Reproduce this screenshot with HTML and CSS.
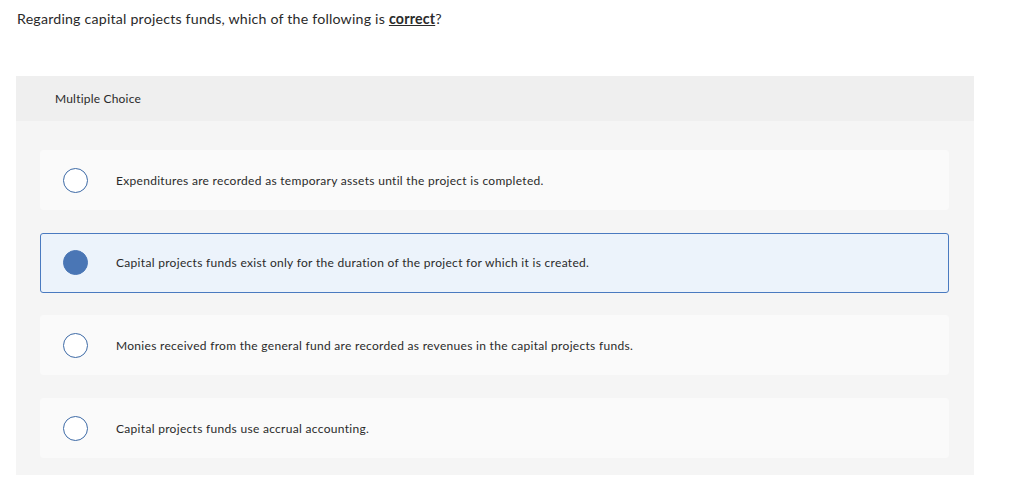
FILE: index.html
```html
<!DOCTYPE html>
<html lang="en">
<head>
    <meta charset="UTF-8">
    <title>Multiple Choice</title>
    <link rel="stylesheet" href="styles.css">
</head>
<body>
<p class="question">Regarding capital projects funds, which of the following is <strong>correct</strong>?</p>
<div class="quiz">
    <div class="quiz-head">Multiple Choice</div>
    <div class="quiz-body">
        <label class="choice">
            <span class="radio"></span>
            <span class="choice-text">Expenditures are recorded as temporary assets until the project is completed.</span>
        </label>
        <label class="choice selected">
            <span class="radio"></span>
            <span class="choice-text">Capital projects funds exist only for the duration of the project for which it is created.</span>
        </label>
        <label class="choice">
            <span class="radio"></span>
            <span class="choice-text">Monies received from the general fund are recorded as revenues in the capital projects funds.</span>
        </label>
        <label class="choice">
            <span class="radio"></span>
            <span class="choice-text">Capital projects funds use accrual accounting.</span>
        </label>
    </div>
</div>
</body>
</html>
```

FILE: styles.css
```css
body {
    margin: 0;
    padding: 0 16px;
    font-family: "Lato", "Liberation Sans", sans-serif;
    color: #2a2a2a;
    background: #fff;
}

.question {
    margin: 0;
    padding: 10px 0 0 1px;
    height: 76px;
    box-sizing: border-box;
    font-size: 14.2px;
    letter-spacing: 0.2px;
}

.question strong {
    text-decoration: underline;
    font-weight: 700;
}

.quiz {
    width: 958px;
    background-color: #f5f5f5;
}

.quiz-head {
    height: 45px;
    background-color: #efefef;
    padding-left: 39px;
    display: flex;
    align-items: center;
    font-size: 12px;
    letter-spacing: 0.2px;
}

.quiz-body {
    display: flex;
    flex-direction: column;
    gap: 22.7px;
    padding: 29px 25px 17px 24px;
}

.choice {
    display: flex;
    align-items: center;
    height: 60px;
    box-sizing: border-box;
    background-color: #fafafa;
    border: 1px solid #fafafa;
    border-radius: 3px;
    padding-left: 22px;
}

.choice.selected {
    background-color: #ecf3fb;
    border-color: #4a7ac0;
}

.radio {
    width: 25px;
    height: 25px;
    box-sizing: border-box;
    border: 1.5px solid #3d6aa6;
    border-radius: 50%;
    background-color: #fff;
    flex: none;
}

.selected .radio {
    background-color: #4a76b5;
    border-color: #4a76b5;
}

.choice-text {
    margin-left: 28px;
    font-size: 12px;
    letter-spacing: 0.3px;
}
```
